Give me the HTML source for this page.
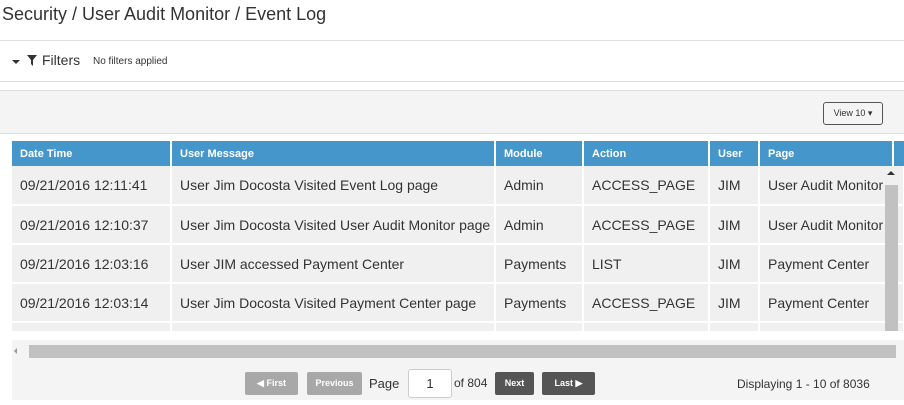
<!DOCTYPE html>
<html><head><style>
*{box-sizing:border-box;margin:0;padding:0}
body{width:904px;height:405px;background:#fff;font-family:"Liberation Sans",sans-serif;color:#333;position:relative;overflow:hidden}
.abs{position:absolute}
.title{left:2px;top:4px;font-size:18px;color:#333;white-space:nowrap}
.filters{left:0;top:40px;width:904px;height:42px;border-top:1px solid #ddd;border-bottom:1px solid #ddd;background:#fff}
.gray{left:0;top:90px;width:904px;height:44px;background:#f4f4f4;border-top:1px solid #ddd;border-bottom:1px solid #ddd}
.view{left:823px;top:102px;width:60px;height:23px;border:1px solid #555;border-radius:3px;font-size:9px;text-align:center;line-height:21px;background:#f4f4f4}
.wrap{position:absolute;left:12px;top:141px;width:892px;height:190px;overflow:hidden}
table{border-collapse:collapse;font-size:14px;table-layout:fixed;width:892px}
th{background:#4597cb;color:#fff;font-size:11px;font-weight:bold;text-align:left;height:25px;padding:0 8px;border-right:2px solid #fff}
td{background:#f0f0f0;height:39px;padding:0 8px;border-right:2px solid #fff;border-bottom:2px solid #fff;white-space:nowrap;overflow:hidden;color:#333}
.footer{left:12px;top:340px;width:892px;height:60px;background:#f4f4f4}
.btn{top:372px;height:23px;border-radius:2px;color:#fff;font-size:9px;font-weight:bold;text-align:center;line-height:23px}
</style></head><body>
<div class="abs title">Security / User Audit Monitor / Event Log</div>
<div class="abs filters">
 <div class="abs" style="left:12px;top:19px;width:0;height:0;border-left:4px solid transparent;border-right:4px solid transparent;border-top:4px solid #333"></div>
 <svg class="abs" style="left:27px;top:14px" width="10" height="11"><path d="M0 0H10L6 5V11L4 9V5Z" fill="#333"/></svg>
 <div class="abs" style="left:42px;top:11px;font-size:14px">Filters</div>
 <div class="abs" style="left:93px;top:15px;font-size:10px">No filters applied</div>
</div>
<div class="abs gray"></div>
<div class="abs view">View 10 ▾</div>
<div class="wrap"><table>
<colgroup><col style="width:159px"><col style="width:324px"><col style="width:88px"><col style="width:126px"><col style="width:50px"><col style="width:134px"><col style="width:11px"></colgroup>
<tr><th>Date Time</th><th>User Message</th><th>Module</th><th>Action</th><th>User</th><th>Page</th><th style="border:0"></th></tr>
<tr><td>09/21/2016 12:11:41</td><td>User Jim Docosta Visited Event Log page</td><td>Admin</td><td>ACCESS_PAGE</td><td>JIM</td><td colspan="2">User Audit Monitor</td></tr>
<tr><td>09/21/2016 12:10:37</td><td>User Jim Docosta Visited User Audit Monitor page</td><td>Admin</td><td>ACCESS_PAGE</td><td>JIM</td><td colspan="2">User Audit Monitor</td></tr>
<tr><td>09/21/2016 12:03:16</td><td>User JIM accessed Payment Center</td><td>Payments</td><td>LIST</td><td>JIM</td><td colspan="2">Payment Center</td></tr>
<tr><td>09/21/2016 12:03:14</td><td>User Jim Docosta Visited Payment Center page</td><td>Payments</td><td>ACCESS_PAGE</td><td>JIM</td><td colspan="2">Payment Center</td></tr>
<tr><td></td><td></td><td></td><td></td><td></td><td colspan="2"></td></tr>
</table></div>
<div class="abs" style="left:885px;top:166px;width:13px;height:165px;background:#f0f0f0"></div>
<div class="abs" style="left:885px;top:185px;width:13px;height:146px;background:#c1c1c1"></div>
<div class="abs" style="left:887px;top:171px;width:0;height:0;border-left:4px solid transparent;border-right:4px solid transparent;border-bottom:4px solid #333"></div>
<div class="abs footer"></div>
<div class="abs" style="left:14px;top:348px;width:0;height:0;border-top:3px solid transparent;border-bottom:3px solid transparent;border-right:3px solid #999"></div>
<div class="abs" style="left:29px;top:345px;width:867px;height:13px;background:#c1c1c1"></div>
<div class="abs btn" style="left:245px;width:53px;background:#a8a8a8">◀ First</div>
<div class="abs btn" style="left:307px;width:55px;background:#a8a8a8">Previous</div>
<div class="abs" style="left:369px;top:376px;font-size:13px">Page</div>
<div class="abs" style="left:408px;top:369px;width:44px;height:29px;background:#fff;border:1px solid #ccc;border-radius:3px;text-align:center;line-height:27px;font-size:13px">1</div>
<div class="abs" style="left:454px;top:376px;font-size:12px">of 804</div>
<div class="abs btn" style="left:495px;width:39px;background:#555">Next</div>
<div class="abs btn" style="left:542px;width:53px;background:#555">Last ▶</div>
<div class="abs" style="left:737px;top:377px;font-size:12px">Displaying 1 - 10 of 8036</div>
</body></html>
